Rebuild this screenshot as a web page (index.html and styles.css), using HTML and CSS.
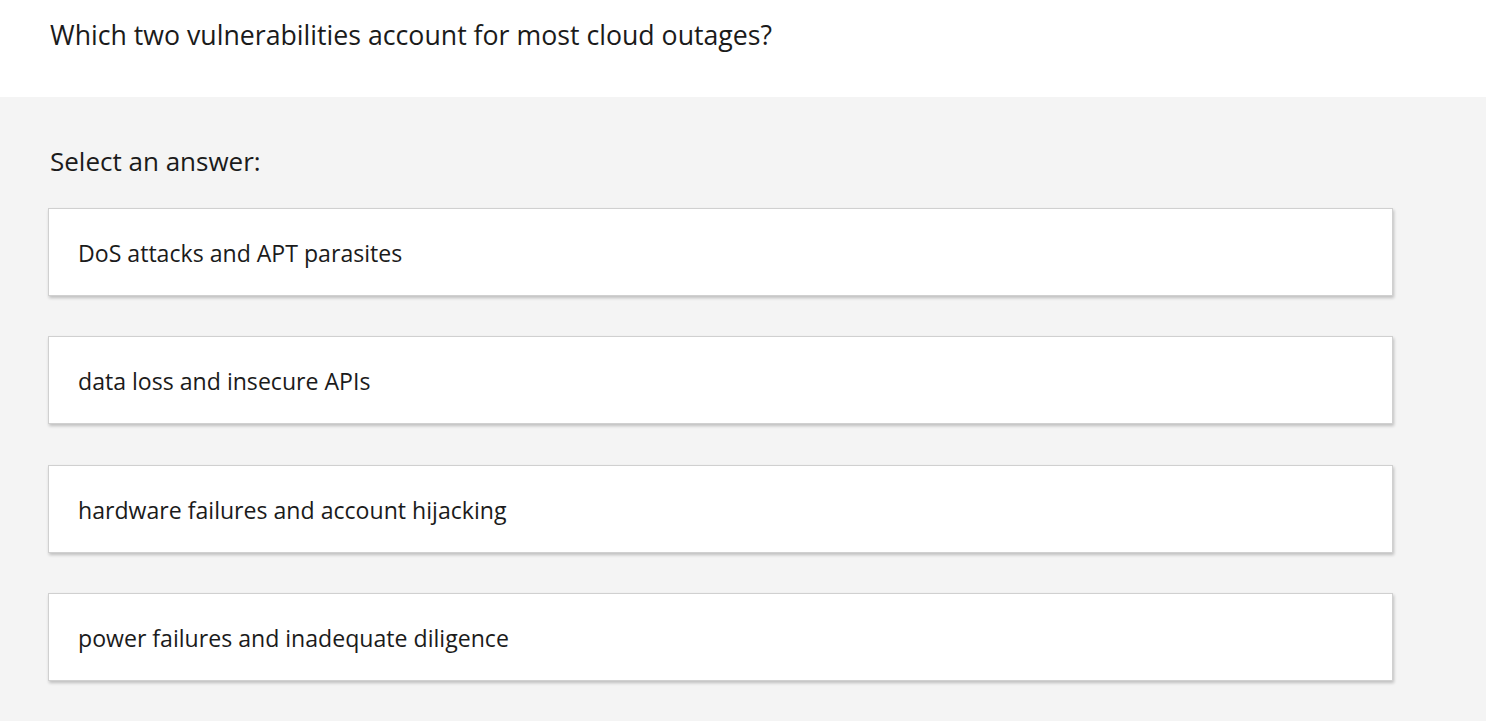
FILE: index.html
```html
<!DOCTYPE html>
<html>
<head>
<meta charset="utf-8">
<link rel="stylesheet" href="styles.css">
</head>
<body>
<header class="question">
  <h1 class="question-text">Which two vulnerabilities account for most cloud outages?</h1>
</header>
<main class="answers">
  <p class="prompt">Select an answer:</p>
  <ul class="options">
    <li class="option">DoS attacks and APT parasites</li>
    <li class="option">data loss and insecure APIs</li>
    <li class="option">hardware failures and account hijacking</li>
    <li class="option">power failures and inadequate diligence</li>
  </ul>
</main>
</body>
</html>
```
FILE: styles.css
```css
html, body {
  margin: 0;
  padding: 0;
  height: 100%;
}
body {
  font-family: "Open Sans", "Noto Sans", sans-serif;
  color: #1b1b1b;
  background: #f4f4f4;
}
.question {
  background: #fff;
  height: 97px;
  padding: 0 50px;
  box-sizing: border-box;
}
.question-text {
  margin: 0;
  padding-top: 17px;
  font-size: 26.7px;
  font-weight: 400;
  line-height: 36px;
}
.answers {
  padding: 47px 93px 0 48px;
}
.prompt {
  margin: 0 0 30px 2px;
  font-size: 26px;
  line-height: 34px;
}
.options {
  list-style: none;
  margin: 0;
  padding: 0;
  display: flex;
  flex-direction: column;
  gap: 40.3px;
}
.option {
  background: #fff;
  border: 1px solid #d0d0d0;
  box-shadow: 1px 2px 3px rgba(0,0,0,0.22);
  height: 88px;
  box-sizing: border-box;
  display: flex;
  align-items: center;
  padding: 2px 0 0 29px;
  font-size: 23.1px;
}
```
